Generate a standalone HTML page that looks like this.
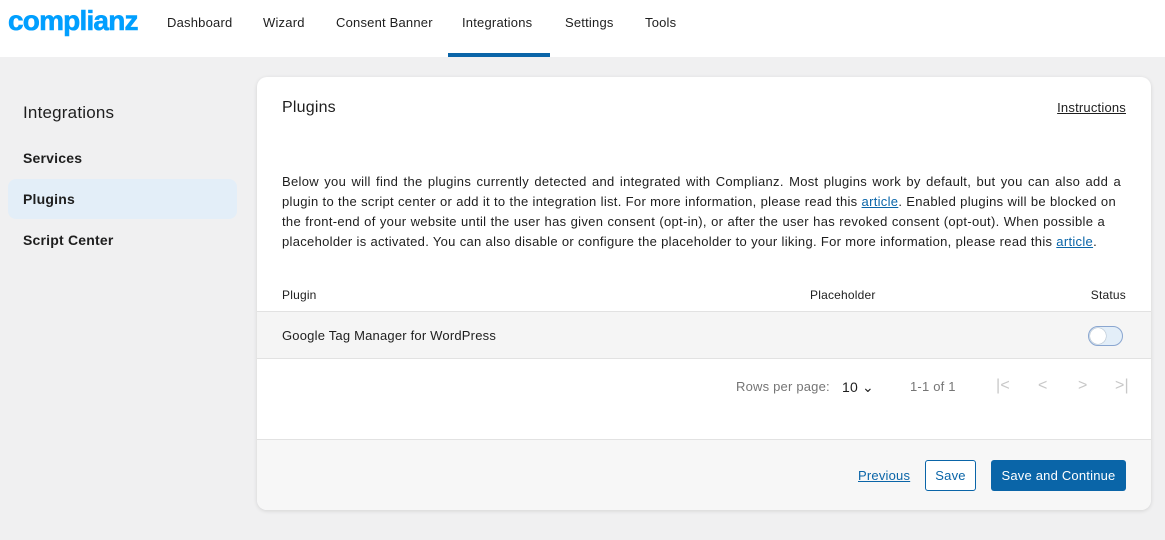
<!DOCTYPE html>
<html><head><meta charset="utf-8"><style>
*{box-sizing:border-box;margin:0;padding:0}
body{width:1165px;height:540px;background:#f0f0f1;font-family:"Liberation Sans",sans-serif;color:#1e1e1e;position:relative;overflow:hidden;letter-spacing:0.2px}
.top{position:absolute;left:0;top:0;width:1165px;height:57px;background:#fff}
.logo{position:absolute;left:8px;top:5px;font-size:28px;font-weight:bold;color:#009fff;letter-spacing:-0.8px;-webkit-text-stroke:0.6px #009fff}
.nav a{position:absolute;top:15px;font-size:13px;color:#1e1e1e;text-decoration:none}
.active{position:absolute;left:448px;top:53px;width:102px;height:4px;background:#0a65a8}
.side h2{position:absolute;left:23px;top:103px;font-size:17px;font-weight:normal;color:#1e1e1e}
.si{position:absolute;left:23px;font-size:14px;font-weight:bold}
.sel{position:absolute;left:8px;top:179px;width:229px;height:40px;background:#e3eef8;border-radius:8px}
.card{position:absolute;left:257px;top:77px;width:894px;height:433px;background:#fff;border-radius:10px;box-shadow:0 1px 4px rgba(0,0,0,.12);overflow:hidden}
.t{position:absolute;font-size:13px}
a.l{color:#0a65a8;text-decoration:underline}
.p div{white-space:nowrap;text-align:justify;text-align-last:justify;height:20px;line-height:20px;letter-spacing:0.3px}
.row{position:absolute;left:0;top:234px;width:894px;height:48px;background:#f5f5f5;border-top:1px solid #e2e2e2;border-bottom:1px solid #e2e2e2}
.foot{position:absolute;left:0;top:362px;width:894px;height:71px;background:#f7f7f7;border-top:1px solid #e2e2e2}
.g{color:#757575}
</style></head><body>
<div class="top">
<div class="logo">complianz</div>
<div class="nav"><a style="left:167px">Dashboard</a><a style="left:263px">Wizard</a><a style="left:336px">Consent Banner</a><a style="left:462px">Integrations</a><a style="left:565px">Settings</a><a style="left:645px">Tools</a></div>
<div class="active"></div>
</div>
<div class="side"><h2>Integrations</h2>
<div class="sel"></div>
<div class="si" style="top:150px">Services</div>
<div class="si" style="top:191px">Plugins</div>
<div class="si" style="top:232px">Script Center</div></div>
<div class="card">
<div class="t" style="left:25px;top:22px;font-size:16px">Plugins</div>
<div class="t" style="right:25px;top:23px;text-decoration:underline">Instructions</div>
<div class="t p" style="left:25px;top:95px">
<div style="width:839px">Below you will find the plugins currently detected and integrated with Complianz. Most plugins work by default, but you can also add a</div>
<div style="width:834px">plugin to the script center or add it to the integration list. For more information, please read this <a class="l">article</a>. Enabled plugins will be blocked on</div>
<div style="width:823px">the front-end of your website until the user has given consent (opt-in), or after the user has revoked consent (opt-out). When possible a</div>
<div style="width:815px">placeholder is activated. You can also disable or configure the placeholder to your liking. For more information, please read this <a class="l">article</a>.</div>
</div>
<div class="t" style="left:25px;top:211px;font-size:12px">Plugin</div>
<div class="t" style="left:553px;top:211px;font-size:12px">Placeholder</div>
<div class="t" style="right:25px;top:211px;font-size:12px">Status</div>
<div class="row"><div class="t" style="left:25px;top:16px">Google Tag Manager for WordPress</div>
<div style="position:absolute;left:831px;top:14px;width:35px;height:20px;border-radius:10px;background:#e3eef8;border:1px solid #8aa6d0"><div style="position:absolute;left:1px;top:1px;width:16px;height:16px;border-radius:50%;background:#fff;box-shadow:0 0 1px #567"></div></div></div>
<div class="t g" style="left:479px;top:302px">Rows per page:</div>
<div class="t" style="left:585px;top:302px;font-size:14px">10 &#8964;</div>
<div class="t g" style="left:653px;top:302px">1-1 of 1</div>
<div class="t" style="left:739px;top:300px;color:#c8c8c8;font-size:16px">|&lt;</div>
<div class="t" style="left:781px;top:300px;color:#c8c8c8;font-size:16px">&lt;</div>
<div class="t" style="left:821px;top:300px;color:#c8c8c8;font-size:16px">&gt;</div>
<div class="t" style="left:858px;top:300px;color:#c8c8c8;font-size:16px">&gt;|</div>
<div class="foot">
<div class="t" style="left:601px;top:28px;color:#0a65a8;text-decoration:underline">Previous</div>
<div style="position:absolute;left:668px;top:20px;width:51px;height:31px;border:1px solid #0a65a8;border-radius:3px;color:#0a65a8;font-size:13px;text-align:center;line-height:29px;background:#fff">Save</div>
<div style="position:absolute;left:734px;top:20px;width:135px;height:31px;background:#0a65a8;border-radius:3px;color:#fff;font-size:13px;text-align:center;line-height:31px">Save and Continue</div>
</div>
</div>
</body></html>
